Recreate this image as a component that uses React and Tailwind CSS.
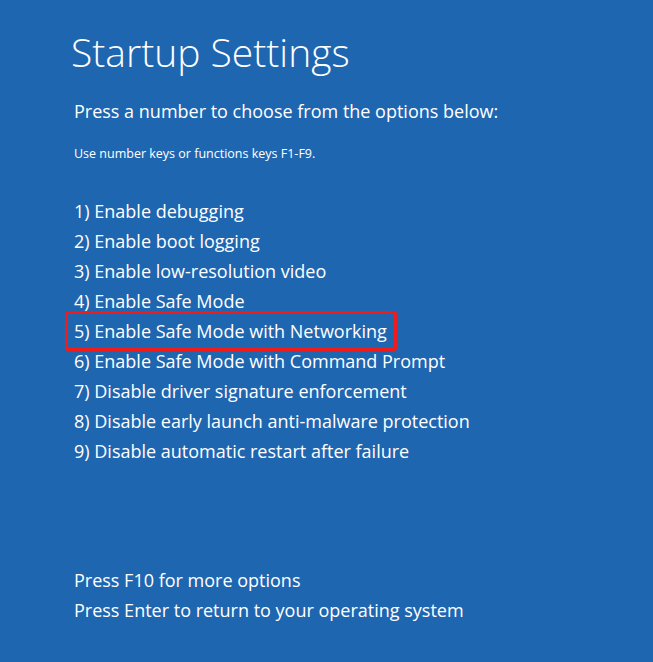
const options = [
  "1) Enable debugging",
  "2) Enable boot logging",
  "3) Enable low-resolution video",
  "4) Enable Safe Mode",
  "5) Enable Safe Mode with Networking",
  "6) Enable Safe Mode with Command Prompt",
  "7) Disable driver signature enforcement",
  "8) Disable early launch anti-malware protection",
  "9) Disable automatic restart after failure",
];

export default function App() {
  return (
    <div
      className="w-[653px] h-[662px] bg-[#1f66b1] text-white overflow-hidden"
      style={{ fontFamily: '"Open Sans", "Noto Sans", sans-serif' }}
    >
      <div className="pl-[74px] pt-[26px]">
        <h1 className="text-[39px] font-light leading-[52px] -ml-[3px]">Startup Settings</h1>
        <p className="mt-[21px] text-[18px] leading-[24px]">
          Press a number to choose from the options below:
        </p>
        <p className="mt-[21px] text-[12.5px] leading-[20px]">
          Use number keys or functions keys F1-F9.
        </p>
        <ul className="mt-[32px]">
          {options.map((o, i) => (
            <li key={i} className="text-[18px] leading-[30px] relative">
              {i === 4 && (
                <span className="absolute -left-[9px] -top-[5px] w-[332px] h-[40px] border-[3px] border-[#f01c1c] rounded-[3px]" />
              )}
              {o}
            </li>
          ))}
        </ul>
        <div className="mt-[99px]">
          <p className="text-[18px] leading-[30px]">Press F10 for more options</p>
          <p className="text-[18px] leading-[30px]">Press Enter to return to your operating system</p>
        </div>
      </div>
    </div>
  );
}
